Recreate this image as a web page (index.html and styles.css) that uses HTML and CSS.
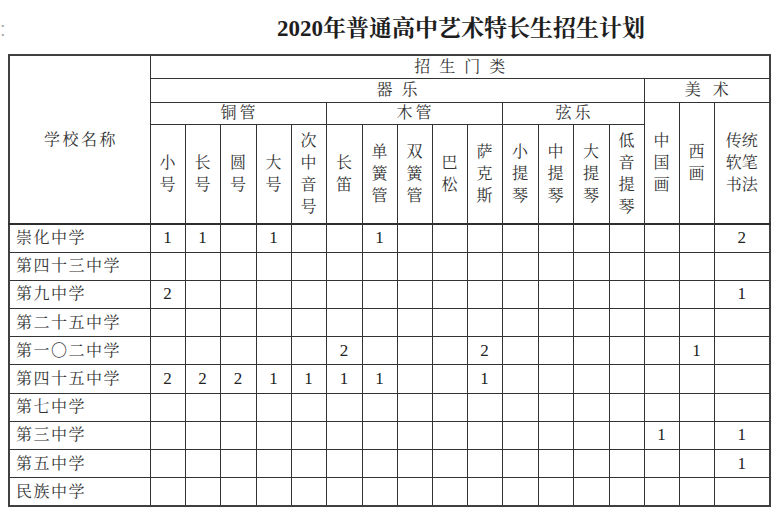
FILE: index.html
```html
<!DOCTYPE html>
<html lang="zh">
<head>
<meta charset="utf-8">
<title>2020年普通高中艺术特长生招生计划</title>
<link rel="stylesheet" href="styles.css">
</head>
<body>
<div class="page">
  <div class="head">
    <span class="cut">:</span>
    <h1 class="title">2020年普通高中艺术特长生招生计划</h1>
  </div>
  <table class="plan">
    <colgroup>
      <col class="c-name">
      <col class="c35"><col class="c35"><col class="c36"><col class="c35"><col class="c35">
      <col class="c36"><col class="c35"><col class="c35"><col class="c35"><col class="c35">
      <col class="c36"><col class="c35"><col class="c36"><col class="c35">
      <col class="c35"><col class="c35"><col class="c-cal">
    </colgroup>
    <thead>
      <tr class="r1">
        <th rowspan="4" class="school-h">学校名称</th>
        <th colspan="17" class="wide1">招生门类</th>
      </tr>
      <tr class="r2">
        <th colspan="14" class="wide2">器乐</th>
        <th colspan="3" class="wide3">美术</th>
      </tr>
      <tr class="r3">
        <th colspan="5" class="grp">铜管</th>
        <th colspan="5" class="grp">木管</th>
        <th colspan="4" class="grp">弦乐</th>
        <th rowspan="2" class="vert">中<br>国<br>画</th>
        <th rowspan="2" class="vert">西<br>画</th>
        <th rowspan="2" class="vert cal">传统<br>软笔<br>书法</th>
      </tr>
      <tr class="r4">
        <th class="vert">小<br>号</th>
        <th class="vert">长<br>号</th>
        <th class="vert">圆<br>号</th>
        <th class="vert">大<br>号</th>
        <th class="vert">次<br>中<br>音<br>号</th>
        <th class="vert">长<br>笛</th>
        <th class="vert">单<br>簧<br>管</th>
        <th class="vert">双<br>簧<br>管</th>
        <th class="vert">巴<br>松</th>
        <th class="vert">萨<br>克<br>斯</th>
        <th class="vert">小<br>提<br>琴</th>
        <th class="vert">中<br>提<br>琴</th>
        <th class="vert">大<br>提<br>琴</th>
        <th class="vert">低<br>音<br>提<br>琴</th>
      </tr>
    </thead>
    <tbody>
      <tr><td class="name">崇化中学</td><td>1</td><td>1</td><td></td><td>1</td><td></td><td></td><td>1</td><td></td><td></td><td></td><td></td><td></td><td></td><td></td><td></td><td></td><td>2</td></tr>
      <tr><td class="name">第四十三中学</td><td></td><td></td><td></td><td></td><td></td><td></td><td></td><td></td><td></td><td></td><td></td><td></td><td></td><td></td><td></td><td></td><td></td></tr>
      <tr><td class="name">第九中学</td><td>2</td><td></td><td></td><td></td><td></td><td></td><td></td><td></td><td></td><td></td><td></td><td></td><td></td><td></td><td></td><td></td><td>1</td></tr>
      <tr><td class="name">第二十五中学</td><td></td><td></td><td></td><td></td><td></td><td></td><td></td><td></td><td></td><td></td><td></td><td></td><td></td><td></td><td></td><td></td><td></td></tr>
      <tr><td class="name">第一〇二中学</td><td></td><td></td><td></td><td></td><td></td><td>2</td><td></td><td></td><td></td><td>2</td><td></td><td></td><td></td><td></td><td></td><td>1</td><td></td></tr>
      <tr><td class="name">第四十五中学</td><td>2</td><td>2</td><td>2</td><td>1</td><td>1</td><td>1</td><td>1</td><td></td><td></td><td>1</td><td></td><td></td><td></td><td></td><td></td><td></td><td></td></tr>
      <tr><td class="name">第七中学</td><td></td><td></td><td></td><td></td><td></td><td></td><td></td><td></td><td></td><td></td><td></td><td></td><td></td><td></td><td></td><td></td><td></td></tr>
      <tr><td class="name">第三中学</td><td></td><td></td><td></td><td></td><td></td><td></td><td></td><td></td><td></td><td></td><td></td><td></td><td></td><td></td><td>1</td><td></td><td>1</td></tr>
      <tr><td class="name">第五中学</td><td></td><td></td><td></td><td></td><td></td><td></td><td></td><td></td><td></td><td></td><td></td><td></td><td></td><td></td><td></td><td></td><td>1</td></tr>
      <tr><td class="name">民族中学</td><td></td><td></td><td></td><td></td><td></td><td></td><td></td><td></td><td></td><td></td><td></td><td></td><td></td><td></td><td></td><td></td><td></td></tr>
    </tbody>
  </table>
</div>
</body>
</html>
```
FILE: styles.css
```css
html, body {
  margin: 0;
  padding: 0;
  background: #ffffff;
}

body {
  overflow: hidden;
  font-family: "Liberation Serif", "Noto Serif CJK SC", "Noto Sans CJK SC", serif;
  color: #2a2a2a;
}

.page {
  width: 779px;
  height: 516px;
}

.head {
  display: flex;
  align-items: center;
  height: 55px;
}

.cut {
  width: 277px;
  flex: none;
  font-size: 20px;
  color: #a8a8a8;
  font-family: "Liberation Sans", sans-serif;
  line-height: 1;
  padding-top: 2px;
}

.title {
  margin: 0;
  font-size: 23px;
  font-weight: bold;
  line-height: 1;
  color: #1e1e1e;
  white-space: nowrap;
  padding-top: 2px;
}

.plan {
  margin-left: 8px;
  margin-top: -1px;
  width: 762px;
  table-layout: fixed;
  border-collapse: collapse;
  border: 2px solid #404040;
}

.c-name { width: 141px; }
.c35 { width: 35px; }
.c36 { width: 36px; }
.c-cal { width: 56px; }

.plan th,
.plan td {
  border: 1px solid #333333;
  padding: 0;
  text-align: center;
  vertical-align: middle;
  font-weight: normal;
  overflow: hidden;
}

.plan th {
  font-size: 16px;
  color: #333333;
  line-height: 20px;
}

.r1 { height: 23px; }
.r2 { height: 24px; }
.r3 { height: 22px; }
.r4 { height: 100px; }

.school-h {
  letter-spacing: 2.5px;
  text-indent: 2.5px;
}

.wide1 {
  letter-spacing: 9px;
  text-indent: 9px;
}

.wide2 {
  letter-spacing: 9px;
  text-indent: 9px;
}

.wide3 {
  letter-spacing: 12px;
  text-indent: 12px;
}

.grp {
  letter-spacing: 3px;
  text-indent: 3px;
}

.plan th.vert {
  line-height: 22px;
}

.plan tbody tr {
  height: 28.2px;
}

.plan tbody tr:first-child td {
  border-top: 2px solid #2e2e2e;
}

.plan td {
  font-size: 17px;
  color: #222222;
  line-height: 20px;
}

.plan td.name {
  text-align: left;
  padding-left: 6px;
  font-size: 16px;
  letter-spacing: 1.5px;
  color: #333333;
  white-space: nowrap;
}
```
